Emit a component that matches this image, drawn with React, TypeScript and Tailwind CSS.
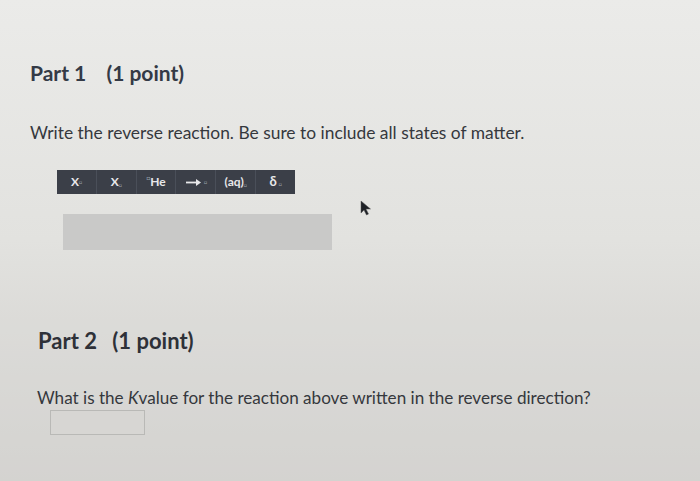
import React from "react";

const Btn = ({ children, last }: { children: React.ReactNode; last?: boolean }) => (
  <div className={`flex-1 h-full flex items-center justify-center ${last ? "" : "border-r border-[#4a4f59]"}`}>
    {children}
  </div>
);

export default function App() {
  return (
    <div
      className="relative w-[700px] h-[481px] overflow-hidden bg-gradient-to-b from-[#ebebe9] via-[#e2e2df] to-[#cfcdca] text-[#30343c]"
      style={{ fontFamily: "Lato, 'Open Sans', sans-serif" }}
    >
      <div className="pt-[58px] pl-[30px]">
        <h2 className="text-[21px] font-bold leading-[30px] text-[#343a46]">
          Part 1 <span className="ml-[15px]">(1 point)</span>
        </h2>
        <p className="mt-[33px] text-[17.4px] leading-[24px] text-[#35383d]">
          Write the reverse reaction. Be sure to include all states of matter.
        </p>
        <div className="ml-[27px] mt-[25px] w-[238px] h-[24px] bg-[#3b3f48] flex items-center text-[#e8e8ea] text-[12px] font-bold">
          <Btn>
            <span>X<sup className="text-[5px] text-[#9aa0aa]">□</sup></span>
          </Btn>
          <Btn>
            <span>X<sub className="text-[5px] text-[#9aa0aa]">□</sub></span>
          </Btn>
          <Btn>
            <span><span className="text-[6px] text-[#9aa0aa] align-top">□</span>He</span>
          </Btn>
          <Btn>
            <span className="flex items-end">
              <svg width="18" height="9" viewBox="0 0 18 9">
                <path d="M1 4.5 H14" stroke="#e8e8ea" strokeWidth="1.8" />
                <path d="M11 1 L16 4.5 L11 8 Z" fill="#e8e8ea" />
              </svg>
              <span className="text-[5px] text-[#9aa0aa] ml-[1px]">□</span>
            </span>
          </Btn>
          <Btn>
            <span>(aq)<sub className="text-[5px] text-[#9aa0aa]">□</sub></span>
          </Btn>
          <Btn last>
            <span className="text-[13px]">δ<span className="text-[5px] text-[#9aa0aa] ml-[2px]">□</span></span>
          </Btn>
        </div>
        <div className="ml-[33px] mt-[20px] w-[269px] h-[36px] bg-[#c9c9c8]" />
      </div>

      <div className="absolute left-[360px] top-[200px]">
        <svg width="12" height="16" viewBox="0 0 12 16">
          <path d="M1 1 L1 13 L4 10 L6.5 15 L8.5 14 L6 9 L10.5 9 Z" fill="#1e2126" stroke="#555" strokeWidth="0.5" />
        </svg>
      </div>

      <div className="mt-[66px] pt-[10px] pl-[38px] bg-[#dddcd9]/40 h-[200px]">
        <h2 className="text-[22px] font-bold leading-[30px] text-[#2e3138]">
          Part 2 <span className="ml-[10px]">(1 point)</span>
        </h2>
        <p className="mt-[31px] -ml-[1px] text-[17.1px] leading-[22px] text-[#35383d]">
          What is the <i>K</i>value for the reaction above written in the reverse direction?
        </p>
        <div className="ml-[12px] mt-[1px] w-[95px] h-[25px] border border-[#b9b9b6] bg-[#d7d6d3]" />
      </div>
    </div>
  );
}
